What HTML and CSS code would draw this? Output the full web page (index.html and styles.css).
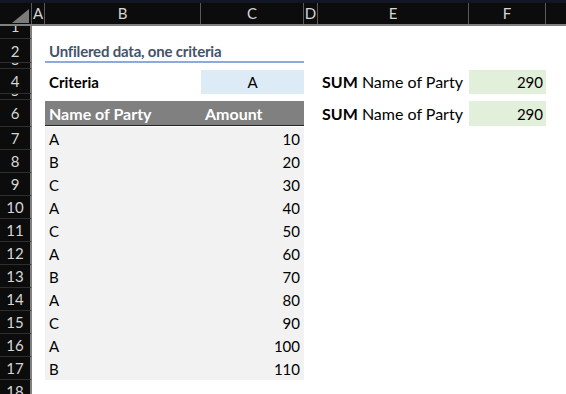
FILE: index.html
```html
<!DOCTYPE html>
<html>
<head>
<meta charset="utf-8">
<link rel="stylesheet" href="styles.css">
</head>
<body>
<div class="sheet">
  <div class="topbar"></div>
  <div class="row colhead">
    <div class="corner"><svg width="31" height="22" viewBox="0 0 31 22"><polygon points="12,20 29,20 29,6" fill="#7a7a7a"/></svg></div>
    <div class="ch">A</div>
    <div class="ch">B</div>
    <div class="ch">C</div>
    <div class="ch">D</div>
    <div class="ch">E</div>
    <div class="ch">F</div>
    <div class="ch last"></div>
  </div>

  <div class="row r1"><div class="rh low">1</div></div>
  <div class="row r2">
    <div class="rh">2</div><div></div>
    <div class="title">Unfilered data, one criteria</div>
  </div>
  <div class="row r3"><div class="rh low">3</div></div>
  <div class="row r4">
    <div class="rh">4</div><div></div>
    <div class="cell bold">Criteria</div>
    <div class="cell crit">A</div>
    <div></div>
    <div class="cell label"><b>SUM</b>&nbsp;Name of Party</div>
    <div class="cell sum">290</div>
  </div>
  <div class="row r5"><div class="rh low">5</div></div>
  <div class="row r6">
    <div class="rh">6</div><div></div>
    <div class="cell th">Name of Party</div>
    <div class="cell th">Amount</div>
    <div></div>
    <div class="cell label"><b>SUM</b>&nbsp;Name of Party</div>
    <div class="cell sum sum6">290</div>
  </div>

  <div class="row data"><div class="rh">7</div><div></div><div class="cell td">A</div><div class="cell td num">10</div></div>
  <div class="row data"><div class="rh">8</div><div></div><div class="cell td">B</div><div class="cell td num">20</div></div>
  <div class="row data"><div class="rh">9</div><div></div><div class="cell td">C</div><div class="cell td num">30</div></div>
  <div class="row data"><div class="rh">10</div><div></div><div class="cell td">A</div><div class="cell td num">40</div></div>
  <div class="row data"><div class="rh">11</div><div></div><div class="cell td">C</div><div class="cell td num">50</div></div>
  <div class="row data"><div class="rh">12</div><div></div><div class="cell td">A</div><div class="cell td num">60</div></div>
  <div class="row data"><div class="rh">13</div><div></div><div class="cell td">B</div><div class="cell td num">70</div></div>
  <div class="row data"><div class="rh">14</div><div></div><div class="cell td">A</div><div class="cell td num">80</div></div>
  <div class="row data"><div class="rh">15</div><div></div><div class="cell td">C</div><div class="cell td num">90</div></div>
  <div class="row data"><div class="rh">16</div><div></div><div class="cell td">A</div><div class="cell td num">100</div></div>
  <div class="row data"><div class="rh">17</div><div></div><div class="cell td">B</div><div class="cell td num">110</div></div>
  <div class="row data"><div class="rh">18</div></div>
</div>
</body>
</html>
```
FILE: styles.css
```css
html, body {
  margin: 0;
  padding: 0;
  background: #ffffff;
}
body {
  font-family: Lato, "Open Sans", sans-serif;
  font-size: 15px;
  color: #000000;
  overflow: hidden;
}
.sheet {
  width: 566px;
  height: 394px;
  overflow: hidden;
}
.topbar {
  height: 3px;
  background: #111725;
}
.row {
  display: grid;
  grid-template-columns: 32px 13px 156px 103px 14px 151px 77px 1fr;
  box-sizing: border-box;
}
.colhead {
  height: 23px;
  background: #0c0c0c;
  border-bottom: 2px solid #808080;
}
.corner {
  border-right: 1px solid #5a5a5a;
  overflow: hidden;
}
.corner svg { display: block; }
.ch {
  color: #d6d6d6;
  border-right: 1px solid #5a5a5a;
  display: flex;
  align-items: center;
  justify-content: center;
  line-height: 1;
}
.ch.last { border-right: none; }
.rh {
  background: #0c0c0c;
  color: #d6d6d6;
  border-right: 2px solid #808080;
  border-bottom: 1px solid #2e2e2e;
  box-sizing: border-box;
  display: flex;
  align-items: center;
  justify-content: center;
  overflow: hidden;
  line-height: 18px;
}
.rh.low { align-items: flex-end; }
.r1 { height: 13px; }
.r2 { height: 24px; }
.r3 { height: 6px; }
.r4 { height: 25px; }
.r5 { height: 6px; }
.r6 { height: 27px; }
.data { height: 23px; }
.r1 .rh { align-items: flex-end; padding-bottom: 3px; }

.title {
  grid-column: 3 / 5;
  color: #44546a;
  font-weight: bold;
  padding-left: 4px;
  border-bottom: 2px solid #8ea9db;
  display: flex;
  align-items: center;
  box-sizing: border-box;
  padding-top: 1px;
  letter-spacing: -0.2px;
}
.cell {
  display: flex;
  align-items: center;
  padding: 0 4px;
  white-space: nowrap;
  box-sizing: border-box;
}
.bold { font-weight: bold; }
.label { font-size: 16px; }
.crit {
  background: #ddebf7;
  justify-content: center;
  margin-top: 1px;
}
.sum {
  background: #e2efda;
  justify-content: flex-end;
  margin-top: 1px;
  padding-right: 3px;
}
.sum6 { margin-bottom: 1px; }
.th {
  background: #808080;
  color: #ffffff;
  font-weight: bold;
  font-size: 16px;
  margin: 1px 0;
  border-bottom: 1px solid #262626;
}
.td { background: #f2f2f2; }
.num { justify-content: flex-end; }
```
